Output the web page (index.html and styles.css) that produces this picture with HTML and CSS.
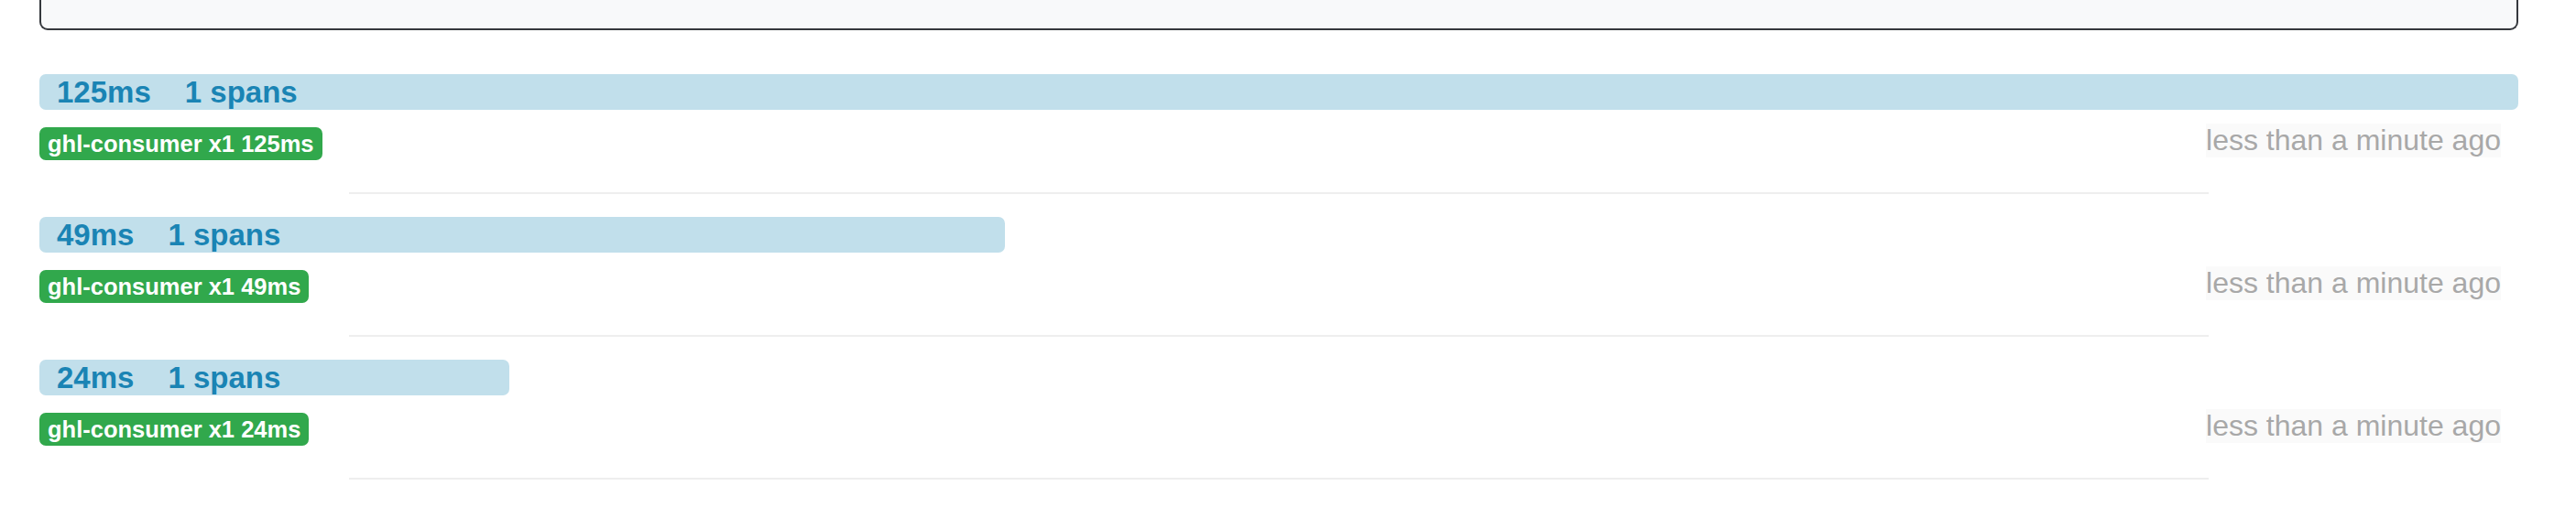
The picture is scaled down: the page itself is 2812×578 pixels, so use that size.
FILE: index.html
```html
<!DOCTYPE html>
<html>
<head>
<meta charset="utf-8">
<link rel="stylesheet" href="styles.css">
</head>
<body>
<div class="page">
  <div class="search-box"></div>
  <div class="traces">
    <div class="trace">
      <div class="bar" style="width: 100%"><span class="dur">125ms</span><span class="spans">1 spans</span></div>
      <div class="meta">
        <span class="badge">ghl-consumer x1 125ms</span>
        <span class="time">less than a minute ago</span>
      </div>
      <hr class="sep">
    </div>
    <div class="trace">
      <div class="bar" style="width: 38.95%"><span class="dur">49ms</span><span class="spans">1 spans</span></div>
      <div class="meta">
        <span class="badge">ghl-consumer x1 49ms</span>
        <span class="time">less than a minute ago</span>
      </div>
      <hr class="sep">
    </div>
    <div class="trace">
      <div class="bar" style="width: 18.96%"><span class="dur">24ms</span><span class="spans">1 spans</span></div>
      <div class="meta">
        <span class="badge">ghl-consumer x1 24ms</span>
        <span class="time">less than a minute ago</span>
      </div>
      <hr class="sep">
    </div>
  </div>
</div>
</body>
</html>
```

FILE: styles.css
```css
html, body {
  margin: 0;
  padding: 0;
  background: #ffffff;
}
body {
  font-family: "Liberation Sans", Arial, sans-serif;
}
.page {
  padding: 0 63px 0 43px;
}
.search-box {
  height: 31px;
  background: #f8f9fa;
  border: 2px solid #35383d;
  border-top: none;
  border-radius: 0 0 9px 9px;
}
.traces {
  margin-top: 48px;
}
.trace {
  display: flex;
  flex-direction: column;
}
.bar {
  height: 39px;
  background: #c1dfeb;
  border-radius: 7px;
  display: flex;
  align-items: center;
  gap: 37px;
  padding-left: 19px;
  box-sizing: border-box;
  color: #1a84b4;
  font-weight: bold;
  font-size: 33px;
  white-space: nowrap;
}
.meta {
  display: flex;
  justify-content: space-between;
  align-items: flex-start;
  margin-top: 19px;
}
.badge {
  height: 36px;
  line-height: 36px;
  padding: 0 9px;
  background: #31a84c;
  color: #ffffff;
  font-weight: bold;
  font-size: 25.5px;
  border-radius: 7px;
  white-space: nowrap;
}
.time {
  height: 37px;
  line-height: 37px;
  margin-top: -4px;
  margin-right: 19px;
  background: #fafafa;
  color: #a8a8a8;
  font-size: 32px;
  white-space: nowrap;
}
.sep {
  width: 75%;
  margin: 35px auto 25px;
  border: 0;
  border-top: 2px solid #eeeeee;
  height: 0;
}
```
